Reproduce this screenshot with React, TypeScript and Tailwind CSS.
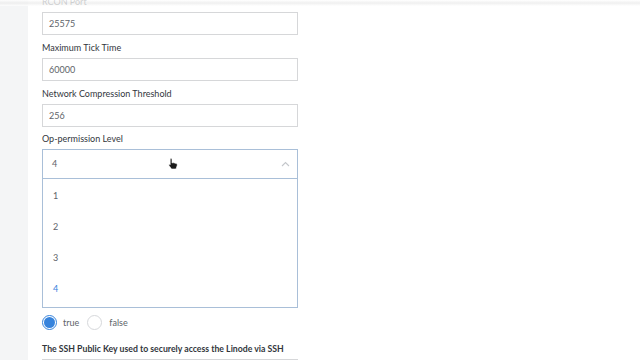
import React from "react";

function Field({ label, value, mt }: { label: string; value: string; mt: string }) {
  return (
    <div className={"flex flex-col " + mt}>
      <div className="h-[12px] leading-[12px] text-[9px] text-[#32363c] mb-[4px] whitespace-nowrap">{label}</div>
      <div className="h-[23px] border border-[#d6d7d9] bg-white flex items-center pl-[6px] text-[9px] text-[#606469]">
        {value}
      </div>
    </div>
  );
}

export default function App() {
  return (
    <div
      className="relative w-[640px] h-[360px] overflow-hidden bg-white flex"
      style={{ fontFamily: "Lato, 'Open Sans', sans-serif" }}
    >
      <div className="w-[28px] shrink-0 bg-[#f4f5f6]" />
      <div className="flex-1 pl-[14px]">
        <div className="w-[256px] flex flex-col">
          <Field label="RCON Port" value="25575" mt="mt-[-4px]" />
          <Field label="Maximum Tick Time" value="60000" mt="mt-[7px]" />
          <Field label="Network Compression Threshold" value="256" mt="mt-[7px]" />
          <div className="flex flex-col mt-[6px]">
            <div className="h-[12px] leading-[12px] text-[9px] text-[#32363c] mb-[4px] whitespace-nowrap">Op-permission Level</div>
            <div className="relative h-[30px] border border-[#a9bfd8] bg-white flex items-center pl-[9px] pr-[7px] text-[9px] text-[#606469]">
              <span className="flex-1">4</span>
              <svg width="9" height="6" viewBox="0 0 9 6">
                <path d="M1 5 L4.5 1.5 L8 5" fill="none" stroke="#c4c7cb" strokeWidth="1.1" />
              </svg>
              <svg width="10" height="12" viewBox="0 0 10 12" className="absolute left-[125px] top-[8px]">
                <path d="M3 0.5 C3.8 0.5 4 1 4 1.5 L4 5 L5 4.6 L6.5 5 L8.5 5.6 C9.3 6 9.4 7 9 8 L8 11 L3.5 11 L1 7.5 C0.6 6.8 1.2 6 2 6.5 L2.2 6.8 L2.2 1.5 C2.2 1 2.4 0.5 3 0.5 Z" fill="#1a1a1a" stroke="#ffffff" strokeWidth="0.6" />
              </svg>
            </div>
            <div className="border border-t-0 border-[#a9bfd8] bg-white pt-[1px] pb-[3px] text-[9px]">
              <div className="h-[31px] flex items-center pl-[10px] text-[#606469]">1</div>
              <div className="h-[31px] flex items-center pl-[10px] text-[#606469]">2</div>
              <div className="h-[31px] flex items-center pl-[10px] text-[#606469]">3</div>
              <div className="h-[31px] flex items-center pl-[10px] text-[#3683dc]">4</div>
            </div>
          </div>
          <div className="flex items-center h-[15px] mt-[7px] text-[9px] text-[#606469]">
            <div className="w-[15px] h-[15px] rounded-full border border-[#3683dc] bg-white flex items-center justify-center">
              <div className="w-[11px] h-[11px] rounded-full bg-[#3683dc]" />
            </div>
            <span className="ml-[6px]">true</span>
            <div className="ml-[8px] w-[15px] h-[15px] rounded-full border border-[#d6d8db] bg-white" />
            <span className="ml-[7px]">false</span>
          </div>
          <div className="mt-[13px] flex flex-col">
            <div className="h-[12px] leading-[12px] text-[8.7px] font-bold text-[#32363c] mb-[4px] whitespace-nowrap">
              The SSH Public Key used to securely access the Linode via SSH
            </div>
            <div className="h-[23px] border border-[#d6d7d9] bg-white" />
          </div>
        </div>
      </div>
      <div className="absolute top-0 left-0 w-full h-[6px] bg-gradient-to-b from-[#ffffff] via-[#ececec] to-[#ffffff] opacity-80" />
    </div>
  );
}
